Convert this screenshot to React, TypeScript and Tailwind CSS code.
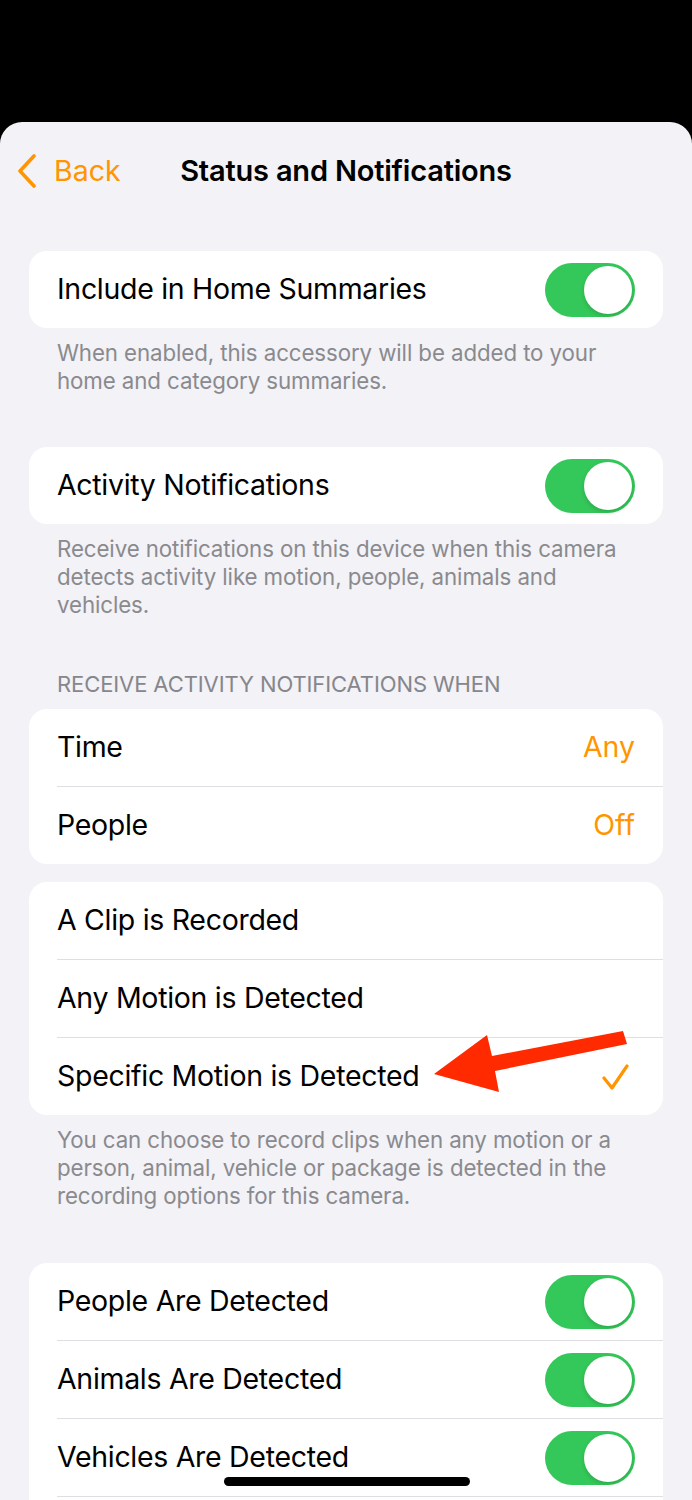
import React from 'react';

const font = { fontFamily: 'Inter, "Noto Sans", sans-serif' };

const Toggle: React.FC = () => (
  <div className="w-[90px] h-[54px] rounded-full bg-[#34c759] flex items-center justify-end px-[3px] shrink-0">
    <div className="w-[48px] h-[48px] rounded-full bg-white shadow-[0_2px_4px_rgba(0,0,0,0.15)]" />
  </div>
);

const Sep: React.FC = () => <div className="ml-[28px] h-px bg-[#dedee3]" />;

type Row = { label: string; right?: React.ReactNode };

const Card: React.FC<{ rows: Row[]; tail?: boolean }> = ({ rows, tail }) => (
  <div className="mx-[29px] bg-white rounded-[18px] overflow-hidden">
    {rows.map((r, i) => (
      <React.Fragment key={r.label}>
        {i > 0 && <Sep />}
        <div className="h-[77px] flex items-center justify-between pl-[28px] pr-[28px]">
          <span className="text-[28.5px] text-black tracking-[-0.3px]">{r.label}</span>
          {r.right}
        </div>
      </React.Fragment>
    ))}
    {tail && (
      <>
        <Sep />
        <div className="h-[77px]" />
      </>
    )}
  </div>
);

const Footer: React.FC<{ lines: string[] }> = ({ lines }) => (
  <div className="px-[57px] pt-[11px] text-[22.3px] leading-[28px] text-[#8a8a8e] tracking-[-0.1px]">
    {lines.map((l) => (
      <div key={l}>{l}</div>
    ))}
  </div>
);

const Value: React.FC<{ text: string }> = ({ text }) => (
  <span className="text-[28.5px] text-[#ff9500]">{text}</span>
);

const Check: React.FC = () => (
  <svg width="28" height="28" viewBox="0 0 28 28" className="mr-[6px]">
    <path d="M3 15 L11 25 L26 3" fill="none" stroke="#ff9500" strokeWidth="3.2" strokeLinecap="round" strokeLinejoin="round" />
  </svg>
);

const toggleRight = (label: string): Row => ({ label, right: <Toggle /> });

export default function App() {
  return (
    <div className="bg-black min-h-[1500px] pt-[122px] relative overflow-hidden" style={font}>
      <div className="bg-[#f2f2f7] rounded-t-[22px] min-h-[1378px]">
        {/* nav */}
        <div className="relative h-[98px] flex items-center justify-center">
          <div className="absolute left-[16px] top-[30px] flex items-center">
            <svg width="22" height="34" viewBox="0 0 22 34">
              <path d="M18 2 L4 17 L18 32" fill="none" stroke="#ff9500" strokeWidth="3.6" strokeLinecap="round" strokeLinejoin="round" />
            </svg>
            <span className="ml-[16px] text-[28.5px] text-[#ff9500] leading-[38px]">Back</span>
          </div>
          <span className="text-[29px] font-semibold text-black tracking-[-0.2px]">Status and Notifications</span>
        </div>

        <div className="mt-[31px]">
          <Card rows={[toggleRight('Include in Home Summaries')]} />
          <Footer lines={['When enabled, this accessory will be added to your', 'home and category summaries.']} />
        </div>

        <div className="mt-[52px]">
          <Card rows={[toggleRight('Activity Notifications')]} />
          <Footer
            lines={[
              'Receive notifications on this device when this camera',
              'detects activity like motion, people, animals and',
              'vehicles.',
            ]}
          />
        </div>

        <div className="mt-[52px] px-[57px] text-[22px] leading-[26px] text-[#86868b] uppercase tracking-[-0.1px]">
          Receive activity notifications when
        </div>
        <div className="mt-[12px]">
          <Card
            rows={[
              { label: 'Time', right: <Value text="Any" /> },
              { label: 'People', right: <Value text="Off" /> },
            ]}
          />
        </div>

        <div className="mt-[18px]">
          <Card
            rows={[
              { label: 'A Clip is Recorded' },
              { label: 'Any Motion is Detected' },
              { label: 'Specific Motion is Detected', right: <Check /> },
            ]}
          />
          <Footer
            lines={[
              'You can choose to record clips when any motion or a',
              'person, animal, vehicle or package is detected in the',
              'recording options for this camera.',
            ]}
          />
        </div>

        <div className="mt-[53px]">
          <Card
            rows={[
              toggleRight('People Are Detected'),
              toggleRight('Animals Are Detected'),
              toggleRight('Vehicles Are Detected'),
            ]}
            tail
          />
        </div>
      </div>

      {/* red annotation arrow */}
      <svg className="absolute left-0 top-0 pointer-events-none" width="692" height="1500" viewBox="0 0 692 1500">
        <polygon
          points="434,1074 487,1035 492,1056 623,1031 627,1044 495,1071 499,1092"
          fill="#ff2a00"
        />
      </svg>

      {/* home indicator */}
      <div className="absolute left-[224px] top-[1477px] w-[246px] h-[9px] rounded-full bg-black" />
    </div>
  );
}
